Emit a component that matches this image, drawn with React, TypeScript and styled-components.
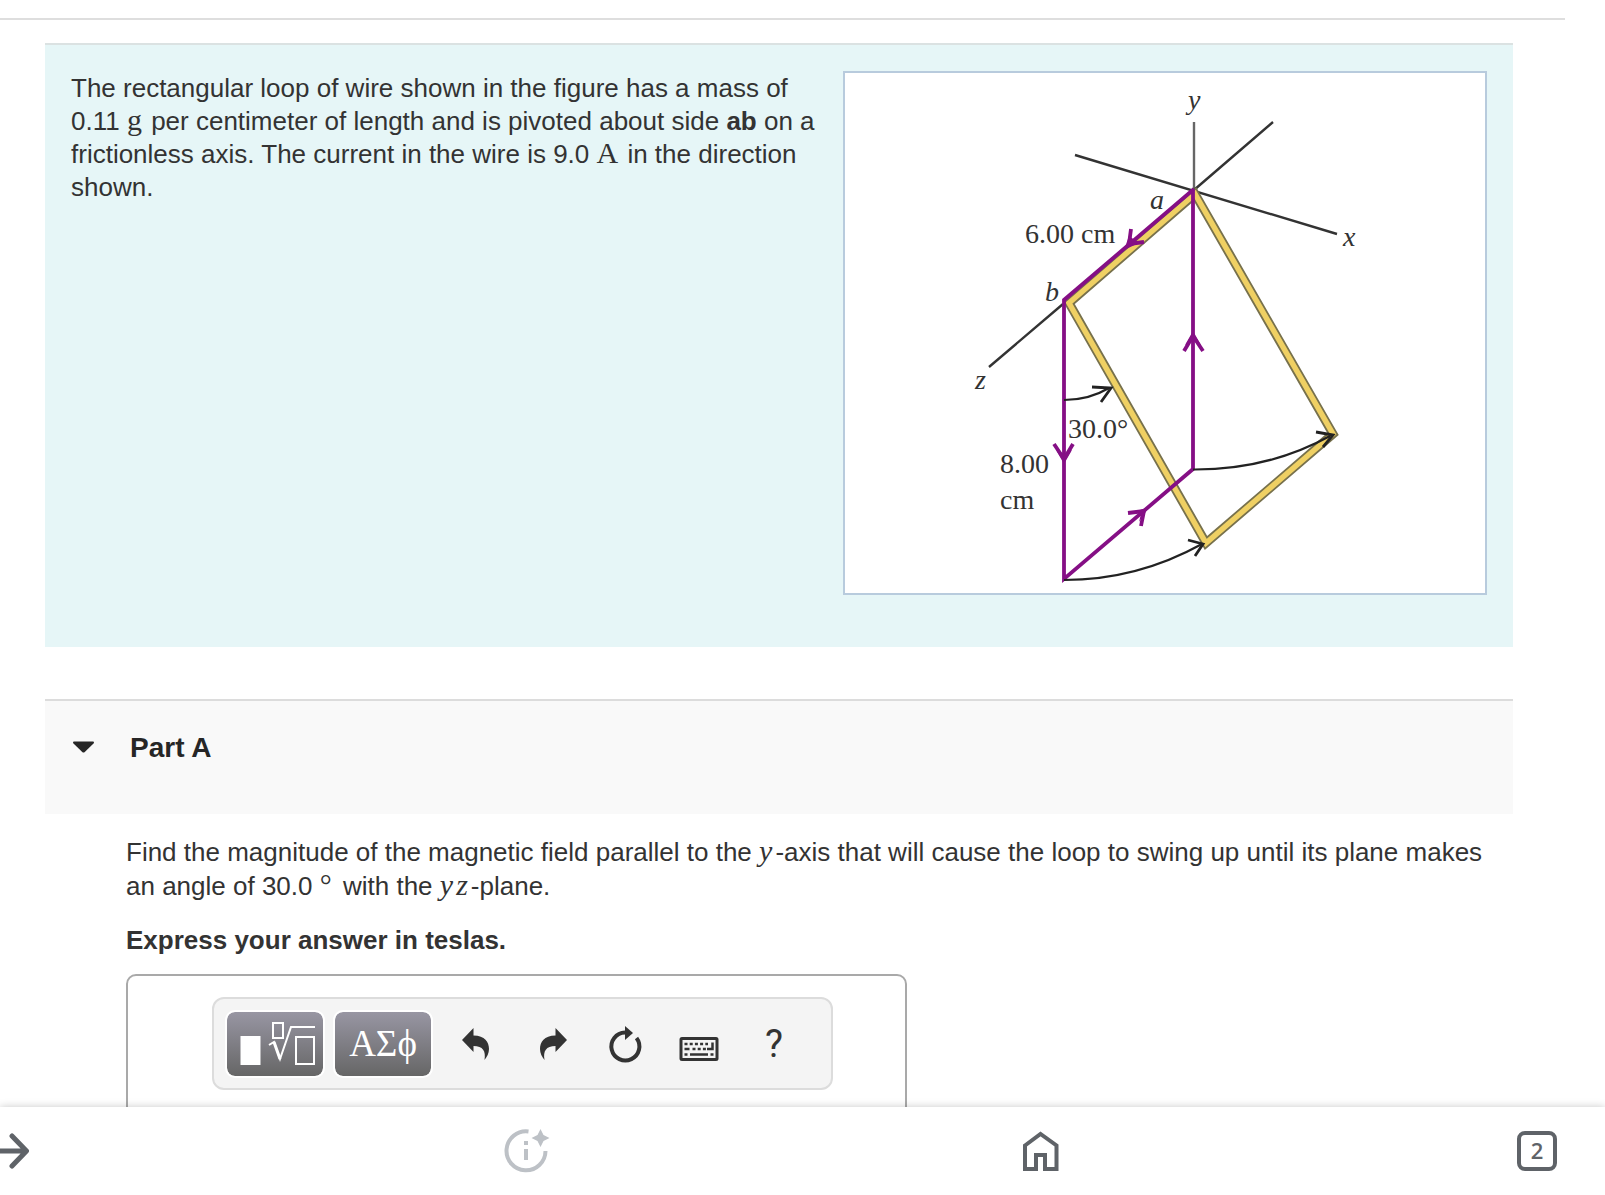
import React from "react";
import styled, { createGlobalStyle } from "styled-components";

const GlobalStyle = createGlobalStyle`
  * { box-sizing: border-box; }
  html, body { margin: 0; height: 100%; background: #fff; overflow: hidden; }
  #root { height: 100%; }
  body {
    font-family: "Liberation Sans", Arial, sans-serif;
    font-size: 26px;
    line-height: 33px;
    color: #333;
  }
`;

const Shell = styled.div`
  display: flex;
  flex-direction: column;
  height: 100vh;
`;

const Viewport = styled.main`
  flex: 1;
  min-height: 0;
  overflow: hidden;
  padding-top: 18px;
`;

const TopRule = styled.hr`
  margin: 0 40px 23px 0;
  border: 0;
  height: 2px;
  background: #dedede;
`;

const Content = styled.div`
  margin: 0 92px 0 45px;
`;

const Intro = styled.section`
  display: flex;
  justify-content: space-between;
  align-items: flex-start;
  gap: 20px;
  padding: 26px 26px 52px;
  margin-bottom: 52px;
  border-top: 2px solid #dbe2e2;
  background: #e6f6f7;
`;

const Statement = styled.p`
  flex: 1;
  margin: 0;
  padding-top: 1px;
`;

const Figure = styled.figure`
  flex: none;
  width: 644px;
  margin: 0;
  border: 2px solid #b8cbdd;
  background: #fff;
  svg { display: block; width: 100%; height: auto; }
`;

const Unit = styled.span`
  padding-right: 2px;
  font-family: "Liberation Serif", "Times New Roman", serif;
  font-size: 30px;
  line-height: 30px;
`;

const Variable = styled.i`
  padding-right: 3px;
  font-family: "Liberation Serif", "Times New Roman", serif;
  font-size: 30px;
  line-height: 30px;
`;

const Degree = styled.span`
  padding-right: 4px;
  font-family: "Liberation Serif", "Times New Roman", serif;
  font-size: 30px;
  line-height: 30px;
`;

const PartHeader = styled.h2`
  margin: 0;
  height: 115px;
  padding: 30px 26px;
  border-top: 2px solid #dcdcdc;
  background: #f9f9f9;
  font-size: 28px;
  line-height: 33px;
`;

const PartToggle = styled.button`
  display: flex;
  align-items: center;
  gap: 35px;
  padding: 0;
  border: 0;
  background: none;
  font: inherit;
  color: #262626;
`;

const PartBody = styled.div`
  padding: 21px 0 0 81px;
  line-height: 34px;
`;

const Question = styled.p`
  margin: 0 0 20px;
`;

const Instruction = styled.p`
  margin: 0 0 17px;
  font-weight: bold;
`;

const AnswerBox = styled.div`
  width: 781px;
  height: 300px;
  padding: 21px 72px 0 84px;
  border: 2px solid #a9a9a9;
  border-radius: 10px;
`;

const Toolbar = styled.div`
  display: flex;
  gap: 8px;
  padding: 11px 11px 10px;
  border: 2px solid #dcdcdc;
  border-radius: 12px;
  background: #f4f4f4;
`;

const PaletteButton = styled.button`
  width: 100px;
  height: 68px;
  padding: 0;
  border: 2px solid #fff;
  border-radius: 10px;
  background: linear-gradient(#9896a3, #666) padding-box;
  color: #fff;
  font: 37px/54px "Liberation Serif", serif;
  svg { display: block; }
`;

const IconRow = styled.div`
  display: flex;
`;

const IconButton = styled.button`
  width: 74px;
  height: 68px;
  padding: 0;
  border: 0;
  background: none;
  color: #333;
  font: 38px/64px Roboto, sans-serif;
  svg { display: block; }
`;

const NavBar = styled.nav`
  position: relative;
  display: grid;
  grid-template-columns: 502fr 515fr 496fr 92px;
  align-items: center;
  height: 88px;
  background: #fff;
  box-shadow: 0 0 8px rgba(0, 0, 0, 0.22);
`;

const NavButton = styled.button`
  width: 48px;
  height: 48px;
  padding: 0;
  border: 0;
  background: none;
  color: #5f6368;
  svg { display: block; }
  &:disabled { color: #bdc1c6; }
`;

const TabCount = styled.span`
  display: block;
  width: 40px;
  height: 40px;
  margin: 0 4px;
  border: 4px solid #5f6368;
  border-radius: 8px;
  font: 600 22px/31px "Open Sans", sans-serif;
  text-align: center;
`;

const PURPLE = "#850f85";
const INK = "#333";

function LoopDiagram() {
  return (
    <svg viewBox="845 73 640 520" role="img" aria-label="Rectangular loop pivoted about side ab">
      <g stroke={INK} strokeWidth="2.4" fill="none">
        <path d="M1194 122V190" stroke="#666" />
        <path d="M1075 155L1337 234M1194 190L1273 122M1063 304L989 367" />
      </g>
      <g fill="none" strokeLinejoin="miter">
        <path d="M1195 194L1069 303L1206 543L1333 434Z" stroke="#77714c" strokeWidth="9" />
        <path d="M1195 194L1069 303L1206 543L1333 434Z" stroke="#efd063" strokeWidth="5.4" />
      </g>
      <g stroke={PURPLE} strokeWidth="3.8" fill="none">
        <path d="M1194 189L1064 300V579L1193 469V189" />
        <path d="M1131 229L1129 244L1144 242M1054 444L1064 459L1073 444M1184 351L1193 336L1203 351M1128 513L1144 511L1141 526" />
      </g>
      <g fill={PURPLE}>
        <path d="M1124 250l5-14 10 7zM1064 464l-8-14 8 4 8-4zM1193 331l-8 14 8-4 8 4zM1149 507l-15 5 7 2-2 8z" />
      </g>
      <g stroke="#222" strokeWidth="2.2" fill="none">
        <path d="M1064 400Q1089 400 1109 388M1193 469.500Q1268 470 1330 436M1064 580Q1137 580 1202 544" />
        <path strokeWidth="2.800" d="M1092 387L1111 388L1101 402M1316 432L1333 435L1323 447M1188 540L1203 544L1195 556" />
      </g>
      <g fontFamily="Liberation Serif, Times New Roman, serif" fontSize="28" fill={INK}>
        <text x="1025" y="243">6.00 cm</text>
        <text x="1068" y="438">30.0°</text>
        <text x="1000" y="473">8.00</text>
        <text x="1000" y="509">cm</text>
        <g fontStyle="italic">
          <text x="1188" y="109">y</text>
          <text x="1150" y="209">a</text>
          <text x="1045" y="301">b</text>
          <text x="1343" y="246">x</text>
          <text x="975" y="389">z</text>
        </g>
      </g>
    </svg>
  );
}

function CaretIcon() {
  return (
    <svg width="24" height="16" viewBox="0 0 24 16" aria-hidden="true">
      <path d="M2 2.500Q2 1.500 3 1.500H22Q23 1.500 23 2.500L22.500 3.500L13.500 12.200Q12.500 13 11.500 12.200L2.500 3.500Z" fill="currentColor" />
    </svg>
  );
}

function TemplatesIcon() {
  return (
    <svg width="96" height="64" viewBox="0 0 96 64" aria-hidden="true">
      <path d="M13.500 24h20v29h-20z" fill="#fff" />
      <g stroke="#fff" strokeWidth="2" fill="none">
        <path d="M46 11h10v15H46zM69 25h18v27H69z" />
        <path d="M42 33l5-3 6 17L64 15H88" />
        <path strokeWidth="3" d="M47 30l6 17" />
      </g>
    </svg>
  );
}

function ReplyIcon({ flip = false }: { flip?: boolean }) {
  return (
    <svg width="74" height="68" viewBox="0 0 74 68" aria-hidden="true">
      <path
        transform={flip ? "translate(73 0) scale(-1 1)" : undefined}
        d="M21 30L32.500 18V25.500C44 25.500 48 32 48 39C48 43 46 47 43.500 50C45 41 42 36 32.500 36V42Z"
        fill="currentColor"
      />
    </svg>
  );
}

function ResetIcon() {
  return (
    <svg width="74" height="68" viewBox="0 0 74 68" aria-hidden="true">
      <path d="M47.500 28A14 14 0 1 1 36 22.500" stroke="currentColor" strokeWidth="4" fill="none" />
      <path d="M36 16L44 23L36 30Z" fill="currentColor" />
    </svg>
  );
}

function KeyboardIcon() {
  return (
    <svg width="74" height="68" viewBox="0 0 74 68" aria-hidden="true">
      <g fill="none" stroke="currentColor">
        <rect x="18" y="28.500" width="36" height="21" rx="1" strokeWidth="3" />
        <path d="M21.500 34H45" strokeWidth="2.500" strokeDasharray="3 2.200" />
        <path d="M21.500 39H45" strokeWidth="2.500" strokeDasharray="5 3 3 2.200 3 2.200 3 9" />
        <path d="M49.500 32.500V39H44" strokeWidth="2.500" />
        <path d="M21.500 44.500H24.500M27 44.500H45M47.500 44.500H50.500" strokeWidth="2.500" />
      </g>
    </svg>
  );
}

export default function App() {
  return (
    <>
      <GlobalStyle />
      <Shell>
        <Viewport>
          <TopRule />
          <Content>
            <Intro>
              <Statement>
                The rectangular loop of wire shown in the figure has a mass of 0.11 <Unit>g</Unit> per
                centimeter of length and is pivoted about side <b>ab</b> on a frictionless axis. The
                current in the wire is 9.0 <Unit>A</Unit> in the direction shown.
              </Statement>
              <Figure>
                <LoopDiagram />
              </Figure>
            </Intro>
            <section>
              <PartHeader>
                <PartToggle aria-expanded="true">
                  <CaretIcon />
                  Part A
                </PartToggle>
              </PartHeader>
              <PartBody>
                <Question>
                  Find the magnitude of the magnetic field parallel to the <Variable>y</Variable>-axis that
                  will cause the loop to swing up until its plane makes an angle of 30.0{" "}
                  <Degree>°</Degree> with the <Variable>y</Variable>
                  <Variable>z</Variable>-plane.
                </Question>
                <Instruction>Express your answer in teslas.</Instruction>
                <AnswerBox>
                  <Toolbar role="toolbar" aria-label="Equation tools">
                    <PaletteButton aria-label="Templates">
                      <TemplatesIcon />
                    </PaletteButton>
                    <PaletteButton>ΑΣϕ</PaletteButton>
                    <IconRow>
                      <IconButton aria-label="Undo">
                        <ReplyIcon />
                      </IconButton>
                      <IconButton aria-label="Redo">
                        <ReplyIcon flip />
                      </IconButton>
                      <IconButton aria-label="Reset">
                        <ResetIcon />
                      </IconButton>
                      <IconButton aria-label="Keyboard shortcuts">
                        <KeyboardIcon />
                      </IconButton>
                      <IconButton aria-label="Help">?</IconButton>
                    </IconRow>
                  </Toolbar>
                </AnswerBox>
              </PartBody>
            </section>
          </Content>
        </Viewport>
        <NavBar>
          <NavButton aria-label="Forward">
            <svg width="48" height="48" viewBox="0 0 48 48" aria-hidden="true">
              <path d="M-4 24H26M12 9L26.500 24L12 39" fill="none" stroke="currentColor" strokeWidth="5" strokeLinecap="round" strokeLinejoin="round" />
            </svg>
          </NavButton>
          <NavButton aria-label="Page info" disabled>
            <svg width="48" height="48" viewBox="0 0 48 48" aria-hidden="true">
              <path d="M26.500 4.500A19.500 19.500 0 1 0 43.500 24" fill="none" stroke="currentColor" strokeWidth="4" />
              <path d="M22 14h4v4h-4zM22 22h4v11h-4z" fill="currentColor" />
              <path d="M38.500 2l3 6 6 3-6 3-3 6-3-6-6-3 6-3z" fill="currentColor" />
            </svg>
          </NavButton>
          <NavButton aria-label="Home">
            <svg width="48" height="48" viewBox="0 0 48 48" aria-hidden="true">
              <path d="M8 18.500L23.500 7L39.500 18.500V42H28V28H19V42H8Z" fill="none" stroke="currentColor" strokeWidth="4" />
            </svg>
          </NavButton>
          <NavButton aria-label="Open tabs">
            <TabCount>2</TabCount>
          </NavButton>
        </NavBar>
      </Shell>
    </>
  );
}
